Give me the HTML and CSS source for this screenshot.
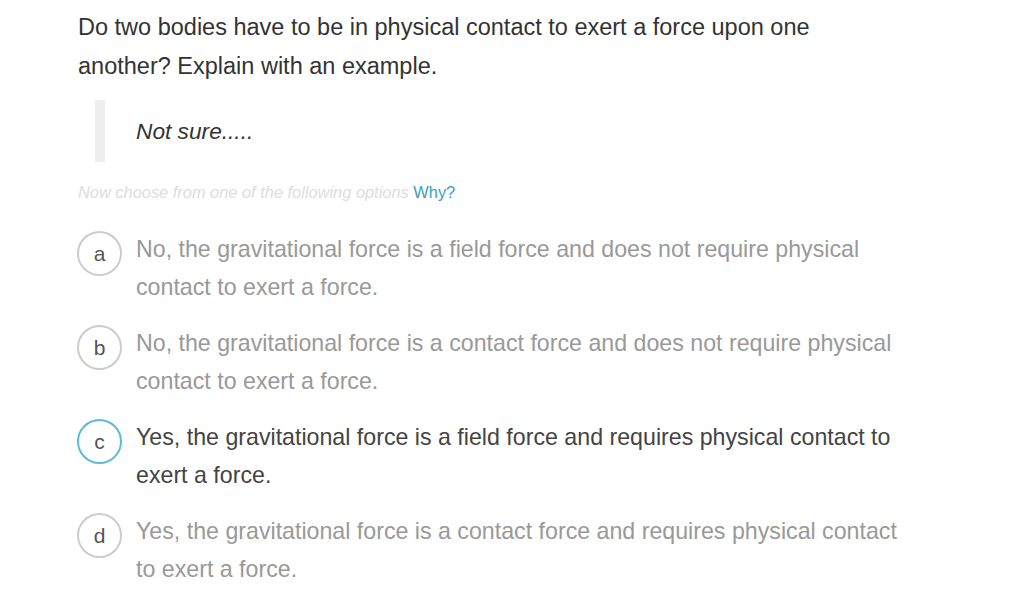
FILE: index.html
```html
<!DOCTYPE html>
<html>
<head>
<meta charset="utf-8">
<link rel="stylesheet" href="styles.css">
</head>
<body>
<div class="page">
  <p class="question">Do two bodies have to be in physical contact to exert a force upon one another? Explain with an example.</p>
  <div class="answer">
    <div class="bar"></div>
    <p class="answer-text">Not sure.....</p>
  </div>
  <p class="hint">Now choose from one of the following options <span class="why">Why?</span></p>
  <ul class="options">
    <li class="option">
      <span class="letter">a</span>
      <span class="opt-text">No, the gravitational force is a field force and does not require physical contact to exert a force.</span>
    </li>
    <li class="option">
      <span class="letter">b</span>
      <span class="opt-text">No, the gravitational force is a contact force and does not require physical contact to exert a force.</span>
    </li>
    <li class="option selected">
      <span class="letter">c</span>
      <span class="opt-text">Yes, the gravitational force is a field force and requires physical contact to exert a force.</span>
    </li>
    <li class="option">
      <span class="letter">d</span>
      <span class="opt-text">Yes, the gravitational force is a contact force and requires physical contact to exert a force.</span>
    </li>
  </ul>
</div>
</body>
</html>
```

FILE: styles.css
```css
html, body {
  margin: 0;
  padding: 0;
  background: #fff;
}
body {
  font-family: "Liberation Sans", Arial, sans-serif;
  color: #333;
}
.page {
  padding: 8px 0 0 77px;
  width: 880px;
}
.question {
  margin: 0 0 0 1px;
  font-size: 23.5px;
  line-height: 39px;
  color: #333;
  width: 760px;
}
.answer {
  display: flex;
  align-items: stretch;
  margin: 14px 0 0 18px;
  height: 62px;
}
.bar {
  width: 10px;
  background: #eeeeee;
}
.answer-text {
  margin: 0 0 0 31px;
  align-self: center;
  font-size: 22.7px;
  line-height: 26px;
  font-style: italic;
  color: #333;
}
.hint {
  margin: 22px 0 0 1px;
  font-size: 16.4px;
  line-height: 16px;
  font-style: italic;
  color: #dddddd;
}
.why {
  font-style: normal;
  color: #3a9fbb;
}
.options {
  list-style: none;
  margin: 30px 0 0 0;
  padding: 0;
}
.option {
  display: flex;
  align-items: flex-start;
  margin-bottom: 18px;
}
.letter {
  flex: none;
  box-sizing: border-box;
  width: 45px;
  height: 45px;
  border: 2px solid #cccccc;
  border-radius: 50%;
  display: flex;
  align-items: center;
  justify-content: center;
  font-size: 21px;
  color: #555;
  margin-top: 1px;
}
.opt-text {
  margin-left: 14px;
  font-size: 23.2px;
  line-height: 38px;
  color: #999;
  width: 775px;
}
.selected .letter {
  border-color: #5bbcd6;
}
.selected .opt-text {
  color: #444;
}
```
